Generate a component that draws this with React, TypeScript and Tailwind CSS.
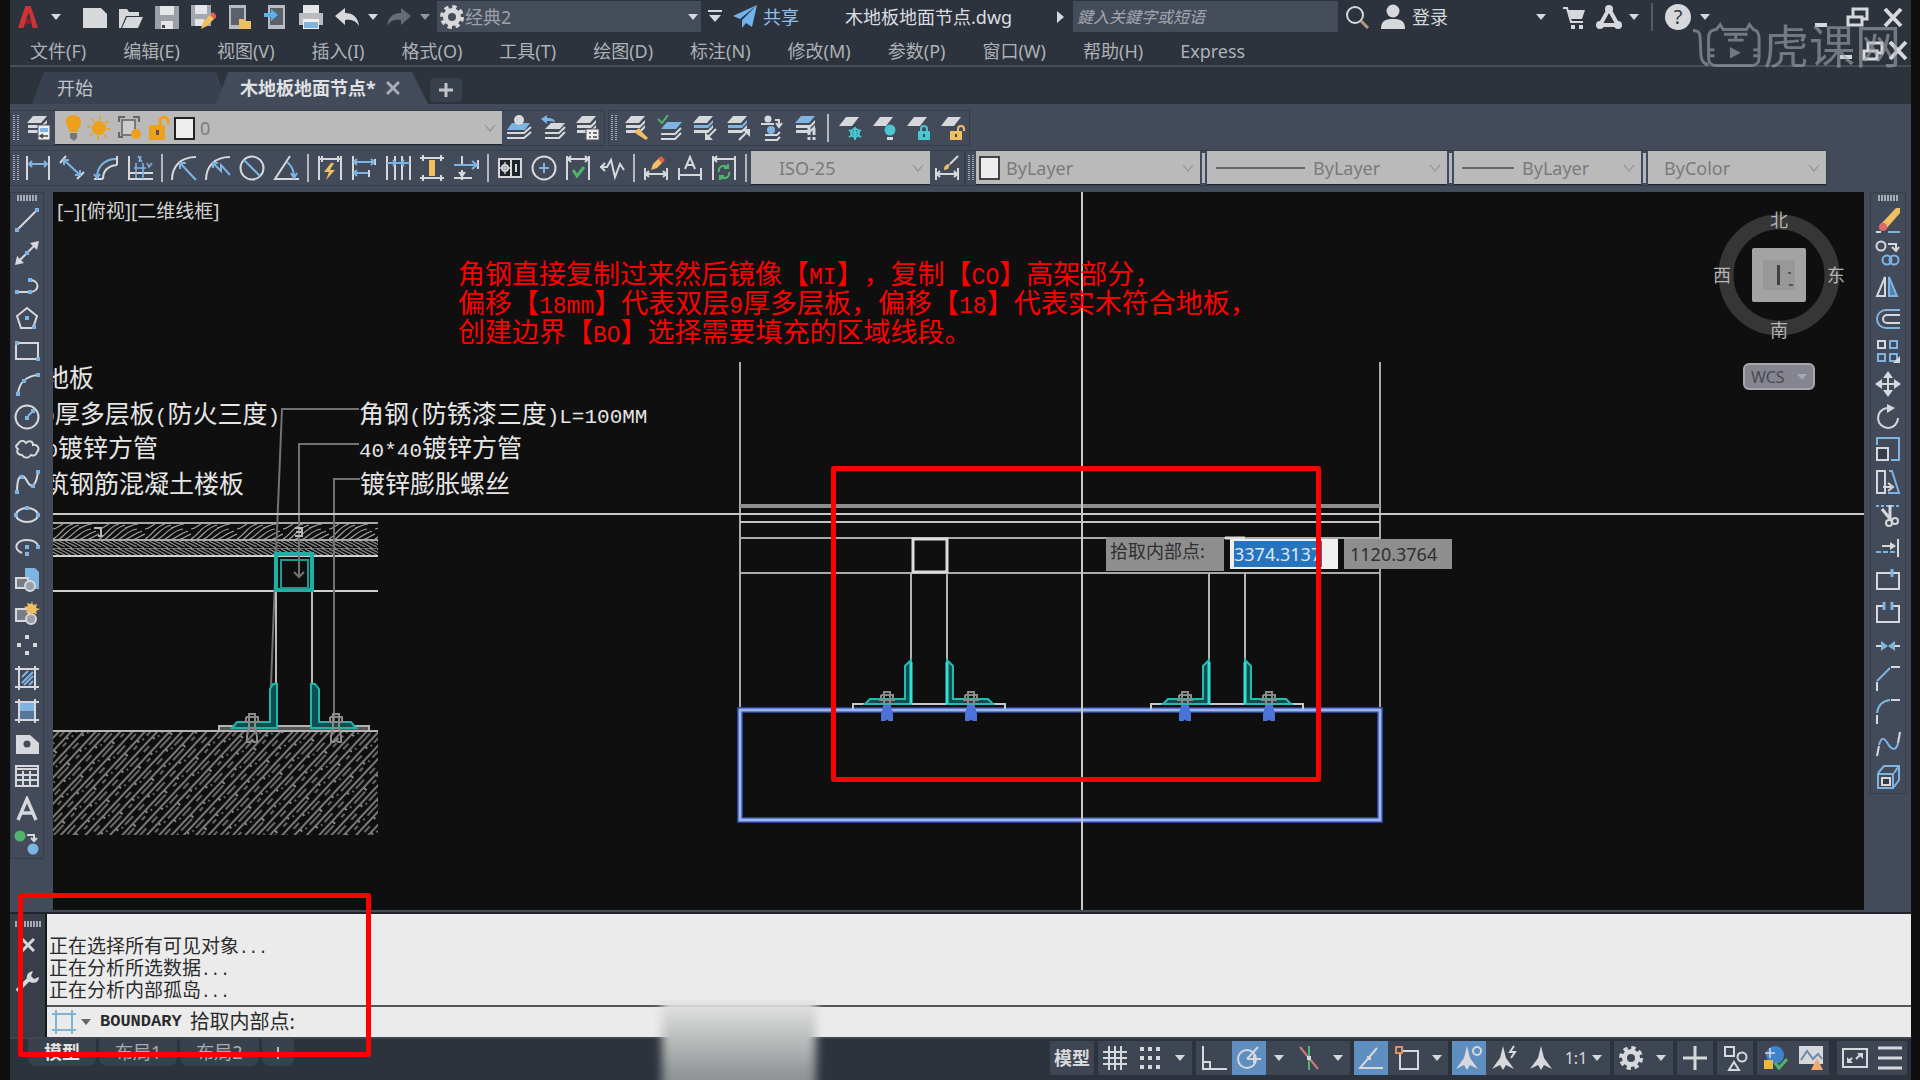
import React, { ReactNode, useState } from 'react'

const W = '#d6d8dc'
const B = '#7db4e2'
const O = '#eda01c'
const Y = '#f0bf62'
const T = '#49c6cf'
const G = '#4fb56c'

const Icon = ({ children, w = 26 }: { children: ReactNode; w?: number }) => (
  <svg width={w} height="26" viewBox={`0 0 ${w} 26`} fill="none" stroke={W} strokeWidth="2" aria-hidden="true">
    {children}
  </svg>
)

const Down = () => (
  <svg width="12" height="8" viewBox="0 0 12 8" aria-hidden="true">
    <path d="M1 1h10l-5 6z" fill={W} />
  </svg>
)

const Dot = ({ x, y, c = B }: { x: number; y: number; c?: string }) => (
  <rect x={x - 2} y={y - 2} width="4" height="4" fill={c} stroke="none" />
)

// three stacked sheets, used by every layer tool
const Sheets = ({ top = W, mid = W }: { top?: string; mid?: string }) => (
  <g stroke="none">
    <path d="M8 1h14l-6 7H2z" fill={top} />
    <path d="M3 10h14l5-5v3l-5 5H3z" fill={mid} />
    <path d="M3 15h14l5-5v3l-5 5H3z" fill={W} />
  </g>
)

const Sheet = () => <path d="M9 2h13l-7 9H2z" fill={W} stroke="none" />

const quickTools = [
  { name: '新建', art: <path d="M1 4h18l6 6v14H1z" fill={W} stroke="none" /> },
  {
    name: '打开',
    art: <path d="M1 24V5h8l2 3h10v4H8L3 24zM9 13h16l-5 11H4z" fill={W} stroke="none" />,
  },
  {
    name: '保存',
    art: (
      <g stroke="none">
        <path d="M1 2h24v23H1z" fill="#9b9fa6" />
        <path d="M6 2h14v9H6zM7 17h12v8H7z" fill="#e4e5e8" />
        <path d="M8 21h3v3H8z" fill="#444" />
      </g>
    ),
  },
  {
    name: '另存为',
    art: (
      <g stroke="none">
        <path d="M1 1h20v21H1z" fill="#a4a8ae" />
        <path d="M5 1h12v9H5zM5 15h9v7H5z" fill="#e4e5e8" />
        <path d="M11 25l2-7 9-9 4 4-9 9z" fill={Y} />
        <path d="M20 11l3-3 4 4-3 3z" fill="#e0605c" />
      </g>
    ),
  },
  {
    name: '从移动设备打开',
    art: (
      <g stroke="none">
        <path d="M3 1h17v24H3z" fill="#b9bbc0" />
        <path d="M5 4h13v17H5z" fill="#5b616b" />
        <path d="M13 25V15h4l2 2h6v8z" fill={Y} />
      </g>
    ),
  },
  {
    name: '保存到移动设备',
    art: (
      <g stroke="none">
        <path d="M6 1h17v24H6z" fill="#b9bbc0" />
        <path d="M8 4h13v17H8z" fill="#5b616b" />
        <path d="M2 9h7V5l7 6-7 6v-4H2z" fill="#59b0ee" />
      </g>
    ),
  },
  {
    name: '打印',
    art: (
      <g stroke="none">
        <path d="M5 1h16v8H5z" fill="#e4e5e8" />
        <path d="M1 9h24v12H1z" fill="#b9bbc0" />
        <path d="M5 15h16v10H5z" fill="#f0f0f0" />
        <path d="M6 18h14v6H6z" fill={B} />
      </g>
    ),
  },
]

const Undo = ({ c, flip }: { c: string; flip?: boolean }) => (
  <Icon>
    <path
      d="M1 12L11 4v5c8 0 13 4 14 13-3-5-7-7-14-6v5z"
      fill={c}
      stroke="none"
      transform={flip ? 'translate(26 0) scale(-1 1)' : undefined}
    />
  </Icon>
)

const Gear = () => (
  <Icon>
    <circle cx="13" cy="13" r="10" strokeWidth="4" strokeDasharray="4.2 3.65" />
    <circle cx="13" cy="13" r="6.5" strokeWidth="5" />
  </Icon>
)

const layerToolsA = [
  {
    name: '将对象的图层置为当前',
    art: (
      <>
        <path d="M6 8h18l-5 7H1z" fill={B} stroke="none" />
        <circle cx="13" cy="5" r="5" fill={W} stroke="none" />
        <path d="M1 18h17l7-6M1 23h17l7-6" />
      </>
    ),
  },
  {
    name: '上一个图层',
    art: (
      <>
        <path d="M11 8h14l-5 6H5z" fill={W} stroke="none" />
        <path d="M5 18h14l6-6M5 23h14l6-6" />
        <path d="M1 4l6-4v3c5 0 8 1 8 5-2-2-4-2-8-2v3z" fill={B} stroke="none" />
      </>
    ),
  },
  {
    name: '图层状态管理器',
    art: (
      <>
        <Sheets />
        <path d="M12 14h13v11H12z" fill="#eee" stroke="#555" strokeWidth="1" />
        <path d="M15 18h2m2 0h4m-8 4h2m2 0h4" stroke="#444" strokeWidth="1.5" />
      </>
    ),
  },
]

const layerToolsB = [
  {
    name: '图层匹配',
    art: (
      <>
        <Sheets />
        <path d="M11 17l5-4 3 4 6 6-2 2-8-5z" fill={Y} stroke="none" />
      </>
    ),
  },
  {
    name: '更改为当前图层',
    art: (
      <>
        <path d="M10 7h15l-6 7H4z" fill={B} stroke="none" />
        <path d="M4 19h14l6-6M4 24h14l6-6" />
        <path d="M1 4l4 4 6-8" stroke={G} />
      </>
    ),
  },
  {
    name: '将对象复制到新图层',
    art: (
      <>
        <Sheets mid={B} />
        <path d="M25 14l-8 8" />
        <path d="M14 25v-8l8 8z" fill={W} stroke="none" />
      </>
    ),
  },
  {
    name: '图层漫游',
    art: (
      <>
        <Sheets mid={B} />
        <path d="M14 25l8-8" />
        <path d="M25 14v8l-8-8z" fill={W} stroke="none" />
      </>
    ),
  },
  {
    name: '冻结到视口',
    art: (
      <>
        <circle cx="9" cy="4" r="3.5" fill={W} stroke="none" />
        <path d="M2 9h13M6 20h12l3-3M6 25h12l3-3" />
        <path d="M16 5h4v6m-3-3l3 4 3-4" />
        <circle cx="12" cy="15" r="4" fill={B} stroke="none" />
      </>
    ),
  },
  {
    name: '图层隔离',
    art: (
      <>
        <Sheets top={B} />
        <path d="M16 13v7m5-7v7m-5 2v3m5-3v3" strokeWidth="3" />
      </>
    ),
  },
]

const layerToolsC = [
  {
    name: '图层冻结',
    art: (
      <>
        <Sheet />
        <path d="M18 12v13M12 15l12 7M24 15l-12 7" stroke={T} />
        <circle cx="18" cy="18" r="4" stroke={T} />
      </>
    ),
  },
  {
    name: '图层关闭',
    art: (
      <>
        <Sheet />
        <circle cx="19" cy="15" r="5.5" fill={T} stroke="none" />
        <path d="M16 22h6v3h-6z" fill={W} stroke="none" />
      </>
    ),
  },
  {
    name: '图层锁定',
    art: (
      <>
        <Sheet />
        <path d="M16 17v-3a3 3 0 016 0v3" stroke={T} />
        <path d="M13 16h12v9H13z" fill={T} stroke="none" />
        <path d="M18 19h2v3h-2z" fill="#444" stroke="none" />
      </>
    ),
  },
  {
    name: '图层解锁',
    art: (
      <>
        <Sheet />
        <path d="M19 17v-3a3 3 0 016 0v2" stroke={Y} />
        <path d="M11 16h12v9H11z" fill={Y} stroke="none" />
        <path d="M16 19h2v3h-2z" fill="#444" stroke="none" />
      </>
    ),
  },
]

const dimGroups = [
  [
    { name: '线性', art: <><path d="M2 1v24M24 1v24" /><path d="M4 9h18M7 6L4 9l3 3M19 6l3 3-3 3" stroke={B} /></> },
    { name: '对齐', art: <><path d="M1 8l6-7M18 24l7-7" /><path d="M5 5l16 15M5 10V5h5M16 20h5v-5" stroke={B} /></> },
    { name: '弧长', art: <><path d="M1 24h9M24 1v9M10 24c0-8 5-13 14-14" /><path d="M4 23C4 11 12 4 23 4M1 19l3 4 3-4" stroke={B} /></> },
    { name: '坐标', art: <><path d="M2 1v23h24M2 18h24" /><path d="M9 8v15M14 1l-2 6M11 1l4 6M16 8v16M7 13h12M20 8l2 4 3-4" stroke={B} strokeWidth="1.6" /></> },
  ],
  [
    { name: '半径', art: <><path d="M25 2C10 2 1 11 1 25" /><path d="M9 8l16 17M9 14V8h6" stroke={B} /></> },
    { name: '折弯', art: <><path d="M25 2C10 2 1 11 1 25" /><path d="M8 8l8 8v-6l9 10M8 13V8h5" stroke={B} /></> },
    { name: '直径', art: <><circle cx="13" cy="13" r="11.5" /><path d="M5 5l16 16" stroke={B} /></> },
    { name: '角度', art: <><path d="M17 1L2 24h24" /><path d="M14 7c5 4 7 9 7 15M18 18l3 5 3-5" stroke={B} /></> },
  ],
  [
    { name: '快速标注', art: <><path d="M2 1v24M24 1v24M2 4h22M5 1v6M21 1v6" /><path d="M14 8l-7 9h5l-3 8 9-10h-5l4-7z" fill={Y} stroke="none" /></> },
    { name: '基线', art: <><path d="M2 1v24M24 4v6M18 15v7" /><path d="M3 7h20M3 18h14M6 4L3 7l3 3M6 15l-3 3 3 3M20 4l3 3-3 3" stroke={B} /></> },
    { name: '连续', art: <><path d="M2 1v24M10 1v24M17 1v24M25 1v24" /><path d="M2 8h23M8 5l3 3-3 3M19 5l-3 3 3 3" stroke={B} /></> },
    { name: '等距标注', art: <><path d="M1 3h24M1 23h24M4 0v6M22 0v6M4 20v6M22 20v6" /><path d="M10 5h6v16h-6z" fill={Y} stroke="none" /></> },
    { name: '折断标注', art: <><path d="M9 1v10m0 4v10M1 23h18M25 5v9" /><path d="M1 10h22M19 6l5 4-5 4" stroke={B} /><path d="M5 17l4 6 4-6z" fill={W} stroke="none" /></> },
  ],
  [
    { name: '公差', art: <><path d="M2 4h22v18H2z" fill="#20252c" /><path d="M14 4v18M19 9v8" /><circle cx="8" cy="13" r="3" /><path d="M8 7v12M3 13h10" strokeWidth="1.4" /></> },
    { name: '圆心标记', art: <><circle cx="13" cy="13" r="11.5" /><path d="M13 8v10M8 13h10" stroke={B} /></> },
    { name: '检验', art: <><path d="M2 1v24M24 1v24M2 4h22M6 1L3 4l3 3M20 1l3 3-3 3" /><path d="M8 15l4 6 7-9" stroke={G} strokeWidth="3" /></> },
    { name: '折弯线性', art: <path d="M1 12h7l4-7 4 17 5-13 4 6M6 8l-4 4 4 4" /> },
  ],
  [
    { name: '编辑标注', art: <><path d="M2 13v12M24 13v12M2 19h22M6 16l-3 3 3 3M20 16l3 3-3 3" /><path d="M8 15l2-6 6-6 4 4-6 6z" fill={Y} stroke="none" /><path d="M15 4l3-3 4 4-3 3z" fill="#e0605c" stroke="none" /></> },
    { name: '编辑标注文字', art: <><path d="M2 13v12M24 13v12M2 20h22M8 14l5-12 5 12M10 10h6" /></> },
    { name: '标注更新', art: <><path d="M2 1v24M24 1v24M2 4h22M6 1L3 4l3 3" /><path d="M8 17a5 5 0 019-4M18 17a5 5 0 01-9 4M17 9v4h-4M9 25v-4h4" stroke={G} /></> },
  ],
]

const drawTools = [
  { name: '直线', art: <><path d="M3 23L23 3" /><Dot x={3} y={23} /><Dot x={23} y={3} /></> },
  { name: '构造线', art: <><path d="M4 22L22 4" /><path d="M25 1l-2 9-7-7zM1 25l2-9 7 7z" fill={W} stroke="none" /><Dot x={13} y={13} /></> },
  { name: '多段线', art: <><path d="M2 19h14c10 0 10-12 0-12" /><Dot x={3} y={19} /><Dot x={16} y={19} /><Dot x={16} y={7} /></> },
  { name: '多边形', art: <><path d="M13 3l10 8-4 12H7L3 11z" /><Dot x={13} y={13} /><Dot x={20} y={22} /></> },
  { name: '矩形', art: <><path d="M2 5h22v16H2z" /><Dot x={3} y={5} /><Dot x={24} y={21} /></> },
  { name: '圆弧', art: <><path d="M4 23C5 12 12 5 24 4" /><Dot x={4} y={23} /><Dot x={10} y={10} /><Dot x={24} y={4} /></> },
  { name: '圆', art: <><circle cx="13" cy="13" r="11.5" /><path d="M14 12l5-5" stroke={B} /><Dot x={13} y={14} /><Dot x={19} y={7} /></> },
  { name: '修订云线', art: <path d="M4 8c2-4 6-4 8-1 3-3 7-2 7 2 5-1 7 4 4 7-1 4-4 4-6 3-3 4-7 3-9 0-4 0-6-3-4-6-3-2-2-4 0-5z" /> },
  { name: '样条曲线', art: <><path d="M3 23C3 4 9 4 13 12s9 6 11-9" /><Dot x={3} y={23} /><Dot x={8} y={8} /><Dot x={19} y={17} /><Dot x={24} y={3} /></> },
  { name: '椭圆', art: <><ellipse cx="13" cy="13" rx="11" ry="7" /><Dot x={2} y={13} /><Dot x={24} y={13} /><Dot x={13} y={6} /></> },
  { name: '椭圆弧', art: <><path d="M8 19C-2 15 2 6 13 6c7 0 11 3 11 7" /><Dot x={13} y={13} /><Dot x={24} y={13} /><Dot x={13} y={20} /></> },
  { name: '插入块', art: <><path d="M11 1h10l4 4v17H11z" fill={B} stroke="none" /><path d="M2 11h12v10H2z" fill="#777c86" /><circle cx="16" cy="19" r="5" fill="#9a9ea6" /></> },
  { name: '创建块', art: <><path d="M2 9h13v12H2z" fill="#777c86" /><circle cx="17" cy="19" r="5" fill="#9a9ea6" /><path d="M18 1l1 4 4-1-1 4 4 1-4 2 1 3-4-1-2 3-1-4-4 1 1-4-3-2 4-1-1-3 4 1z" fill={Y} stroke="none" /></> },
  { name: '点', art: <><Dot x={13} y={5} c={W} /><Dot x={5} y={13} c={W} /><Dot x={21} y={13} c={W} /><Dot x={13} y={21} c={W} /></> },
  { name: '图案填充', art: <><path d="M5 1v24M21 1v24M1 4h24M1 22h24" /><path d="M8 12l6-6M8 18L19 7M10 20l9-9M15 20l4-4" stroke={B} /></> },
  { name: '渐变色', art: <><path d="M6 5h14v8H6z" fill={B} stroke="none" /><path d="M6 13h14v8H6z" fill="#56779a" stroke="none" /><path d="M5 1v24M21 1v24M1 4h24M1 22h24" /></> },
  { name: '面域', art: <><path d="M2 4h14l9 8v11H2z" fill={W} stroke="none" /><circle cx="13" cy="13" r="3.5" fill="#444b57" stroke="none" /></> },
  { name: '表格', art: <><path d="M2 3h22v20H2z" /><path d="M2 6h22M2 12h22M2 17h22M9 8v15M16 8v15" /></> },
  { name: '多行文字', art: <path d="M4 24L13 3l9 21M8 17h10" strokeWidth="3.4" /> },
  { name: '添加选定对象', art: <><circle cx="6" cy="7" r="5.5" fill={G} stroke="none" /><circle cx="19" cy="20" r="5.5" fill={B} stroke="none" /><path d="M13 6h7v6M17 9l3 3 3-3" /></> },
]

const modifyTools = [
  { name: '删除', art: <><path d="M1 25h5" /><path d="M13 25h12" stroke={B} /><path d="M6 17L21 1h4v5L11 22z" fill={Y} stroke="none" /><circle cx="8" cy="20" r="4" fill="#e0696a" stroke="none" /></> },
  { name: '复制', art: <><circle cx="6" cy="6" r="4.5" /><path d="M13 4h8v6M17 7l4 4 3-4" /><circle cx="12" cy="20" r="4.5" stroke={B} /><circle cx="19" cy="20" r="4.5" stroke={B} /></> },
  { name: '镜像', art: <><path d="M10 4v19H2z" /><path d="M14 4v19h8z" stroke={B} fill="#5284b0" /></> },
  { name: '偏移', art: <><path d="M25 4H11a9 9 0 000 18h14" stroke={B} /><path d="M25 9H12a4 4 0 000 8h13" /></> },
  { name: '阵列', art: <><path d="M3 3h7v7H3z" /><path d="M15 3h7v7h-7zM3 16h7v7H3zM15 16h7v7h-7z" stroke={B} /><path d="M25 18v7h-7z" fill={W} stroke="none" /></> },
  { name: '移动', art: <><path d="M13 3v20M3 13h20" /><path d="M13 0l5 7H8zM13 26l5-7H8zM0 13l7-5v10zM26 13l-7-5v10z" fill={W} stroke="none" /></> },
  { name: '旋转', art: <><path d="M12 4a10 10 0 1011 10" /><path d="M12 0l8 4-8 5z" fill={W} stroke="none" /></> },
  { name: '缩放', art: <><path d="M2 9V2h22v22h-8" stroke={B} /><path d="M2 12h11v12H2z" fill="#373d49" /></> },
  { name: '拉伸', art: <><path d="M2 2h8v22H2z" /><path d="M14 2h3l7 22H13" stroke={B} /><path d="M8 18h8M13 14l5 4-5 4" /></> },
  { name: '修剪', art: <><path d="M1 4h24" strokeDasharray="3 2" stroke={B} /><path d="M7 7l9 11M15 3v14" strokeWidth="3" /><circle cx="14" cy="21" r="3" /><circle cx="20" cy="19" r="3" /></> },
  { name: '延伸', art: <><path d="M23 4v18M7 11h11" /><path d="M15 7l6 4-6 4z" fill={W} stroke="none" /><path d="M1 17h21" stroke={B} strokeDasharray="5 2" /></> },
  { name: '打断于点', art: <><path d="M2 6h22v16H2z" /><path d="M17 2v8" stroke={B} strokeWidth="3" /></> },
  { name: '打断', art: <><path d="M9 6H2v16h22V6h-6" /><path d="M9 2v8M17 2v8" stroke={B} strokeWidth="3" /></> },
  { name: '合并', art: <><path d="M1 13h6M19 13h6" /><path d="M6 8l7 5-7 5zM20 8l-7 5 7 5z" fill={B} stroke="none" /></> },
  { name: '倒角', art: <><path d="M2 26v-9M16 2h9" /><path d="M2 16L15 3" stroke={B} /></> },
  { name: '圆角', art: <><path d="M2 26v-9M16 2h9" /><path d="M2 15C3 7 8 3 15 2" stroke={B} /></> },
  { name: '光顺曲线', art: <><path d="M2 25l2-10M25 1l-2 11" /><path d="M4 14C7 4 10 8 13 13s8 8 10-1" stroke={B} /></> },
  { name: '分解', art: <><path d="M3 9l6-7h15v14l-5 7M24 2l-5 7" stroke={B} /><path d="M3 10h15v14H3z" stroke={B} /><path d="M7 14h8v7H7z" fill="#343a46" /></> },
]

const menus = ['文件(F)', '编辑(E)', '视图(V)', '插入(I)', '格式(O)', '工具(T)', '绘图(D)', '标注(N)', '修改(M)', '参数(P)', '窗口(W)', '帮助(H)', 'Express']

const Tool = ({ name, art }: { name: string; art: ReactNode }) => (
  <button title={name} className="flex w-[34px] shrink-0 items-center justify-center">
    <Icon>{art}</Icon>
  </button>
)

const Grip = () => (
  <div className="flex w-[10px] shrink-0 justify-center">
    <svg width="6" height="26" aria-hidden="true">
      <path d="M1 0v26M5 0v26" stroke="#a5abb6" strokeWidth="2" strokeDasharray="1 1" />
    </svg>
  </div>
)

const TopGrip = ({ w = 20 }: { w?: number }) => (
  <svg width={w} height="8" aria-hidden="true">
    <path d={`M0 4h${w}`} stroke="#a5abb6" strokeWidth="6" strokeDasharray="2 1" />
  </svg>
)

const Sep = () => (
  <div className="flex w-[10px] shrink-0 justify-center">
    <div className="h-7 w-[2px] bg-[#b3b6bd]" />
  </div>
)

const Combo = ({ name, value, className, children }: { name: string; value: string; className: string; children?: ReactNode }) => (
  <div className={`flex h-[34px] items-center border-b border-[#20252e] bg-[#bababa] pr-[6px] ${className}`}>
    {children}
    <select aria-label={name} className="min-w-0 flex-1 appearance-none bg-transparent text-lg leading-6 text-[#7b7b7b] outline-none">
      <option>{value}</option>
    </select>
    <svg width="12" height="8" viewBox="0 0 12 8" fill="none" stroke="#9c9c9c" strokeWidth="1.5" aria-hidden="true">
      <path d="M1 1l5 6 5-6" />
    </svg>
  </div>
)

const TitleBar = () => (
  <div className="flex h-[33px] items-center">
    <button title="应用程序" className="flex w-[56px] items-center gap-3 pl-2">
      <svg width="20" height="24" viewBox="0 0 22 24" aria-hidden="true">
        <path d="M0 24L8 0h6l8 24h-6l-1-5H8l-2 5zm9-9h5L12 7z" fill="#cc3237" />
        <path d="M6 24l3-9h5l1 4H9z" fill="#8f2024" />
      </svg>
      <Down />
    </button>
    <div className="ml-[11px] flex">
      {quickTools.map((t) => (
        <button key={t.name} title={t.name} className="flex w-9 justify-center">
          <Icon>{t.art}</Icon>
        </button>
      ))}
    </div>
    <button title="放弃" className="flex w-9 justify-center">
      <Undo c={W} />
    </button>
    <button title="放弃列表" className="flex w-4 justify-center">
      <Down />
    </button>
    <button title="重做" className="flex w-9 justify-center">
      <Undo c="#656c76" flip />
    </button>
    <button title="重做列表" className="flex w-4 justify-center opacity-60">
      <Down />
    </button>
    <label className="ml-1 flex h-[31px] w-[264px] shrink-0 items-center bg-[#444b59] pr-[2px] pl-[2px]">
      <Gear />
      <select aria-label="工作空间" className="min-w-0 flex-1 appearance-none bg-transparent text-lg leading-6 text-[#9da1a8] outline-none">
        <option>经典2</option>
      </select>
      <Down />
    </label>
    <button title="自定义快速访问工具栏" className="flex w-7 justify-center">
      <svg width="14" height="14" viewBox="0 0 14 14" aria-hidden="true">
        <path d="M0 0h14v2H0zM1 5h12l-6 7z" fill={W} />
      </svg>
    </button>
    <button className="ml-[4px] flex items-center gap-[6px] text-lg leading-6 text-[#8fc0ee]">
      <svg width="24" height="24" viewBox="0 0 24 24" aria-hidden="true">
        <path d="M24 0L0 11l7 3zM24 0L9 15v8l4-5 6 4z" fill="#6fb2ee" />
      </svg>
      共享
    </button>
    <div className="ml-[46px] w-[212px] shrink-0 text-lg leading-6 text-[#dcdde0]">木地板地面节点.dwg</div>
    <svg width="7" height="12" viewBox="0 0 7 12" aria-hidden="true">
      <path d="M0 0l7 6-7 6z" fill={W} />
    </svg>
    <input
      aria-label="搜索"
      placeholder="鍵入关鍵字或短语"
      className="ml-[9px] h-[31px] w-[265px] shrink-0 bg-[#444b59] px-1 text-base italic placeholder-[#a3a7af] outline-none"
    />
    <button title="搜索" className="ml-[6px] flex">
      <Icon>
        <circle cx="11" cy="11" r="8" />
        <path d="M17 17l7 7" stroke="#b49a80" strokeWidth="3" />
      </Icon>
    </button>
    <button className="ml-[10px] flex items-center gap-[6px] text-lg leading-6 text-[#d6d8dc]">
      <Icon>
        <circle cx="13" cy="7" r="6.5" fill={W} stroke="none" />
        <path d="M1 25c0-8 4-10 12-10s12 2 12 10z" fill={W} stroke="none" />
      </Icon>
      登录
    </button>
    <button title="登录选项" className="ml-auto flex">
      <Down />
    </button>
    <button title="购物车" className="ml-[14px] flex">
      <Icon>
        <path d="M2 4h4l4 14h12" />
        <path d="M7 6h17l-3 9H10z" fill={W} stroke="none" />
        <path d="M10 21h4v4h-4zM18 21h4v4h-4z" fill={W} stroke="none" />
      </Icon>
    </button>
    <button title="Autodesk App" className="ml-[9px] flex items-center gap-[6px]">
      <Icon>
        <path d="M13 5L4 21M13 5l9 16M5 21h16" strokeWidth="4" />
        <circle cx="13" cy="5" r="4" fill={W} stroke="none" />
        <circle cx="4" cy="21" r="4" fill={W} stroke="none" />
        <circle cx="22" cy="21" r="4" fill={W} stroke="none" />
      </Icon>
      <Down />
    </button>
    <div className="ml-[11px] h-7 w-[2px] bg-[#555c66]" />
    <button title="帮助" className="ml-3 flex items-center gap-2">
      <span className="flex h-[26px] w-[26px] items-center justify-center rounded-full bg-[#d6d8dc] text-xl leading-6 text-[#343b45]">?</span>
      <Down />
    </button>
    <div className="ml-[97px] flex items-center gap-[10px] pr-[5px]">
      <button title="最小化" className="flex">
        <Icon><path d="M7 21h12" strokeWidth="4" /></Icon>
      </button>
      <button title="还原" className="flex">
        <Icon><path d="M9 12V5h14v10h-4" strokeWidth="3" /><path d="M4 13h14v8H4z" strokeWidth="3" /></Icon>
      </button>
      <button title="关闭" className="flex">
        <Icon><path d="M5 5l16 17M21 5L5 22" strokeWidth="4" /></Icon>
      </button>
    </div>
  </div>
)

const MenuBar = () => (
  <nav className="flex h-[34px] items-center border-b-2 border-[#474e58] pt-1 pl-[20px] text-lg leading-6 text-[#aeb1b6]">
    <div className="flex flex-1 gap-[37px]">
      {menus.map((m) => (
        <button key={m} className="whitespace-nowrap">
          {m}
        </button>
      ))}
    </div>
    <button title="最小化图形" className="flex">
      <Icon><path d="M7 19h12" strokeWidth="4" /></Icon>
    </button>
    <button title="还原图形" className="flex">
      <Icon><path d="M9 12V5h14v10h-4" strokeWidth="3" /><path d="M5 13h13v8H5z" strokeWidth="3" /></Icon>
    </button>
    <button title="关闭图形" className="flex">
      <Icon><path d="M5 4l16 17M21 4L5 21" strokeWidth="4" /></Icon>
    </button>
  </nav>
)

const Watermark = () => (
  <div className="pointer-events-none absolute top-[20px] right-[10px] flex items-center text-[#a4a8ad] opacity-60">
    <svg width="70" height="46" viewBox="0 0 72 46" fill="none" stroke="currentColor" strokeWidth="3" aria-hidden="true">
      <path d="M0 8c9 0 7 5 8 22 0 8 2 13 8 13" />
      <path d="M16 16c0-6 3-9 8-9l4-5 3 5h24l3-5 4 5c4 1 6 4 6 9v20c0 5-3 8-8 8H24c-5 0-8-3-8-8z" />
      <path d="M32 12h24M36 18h16M16 28h6M16 34h6M68 28h-6M68 34h-6M44 12v6" />
      <path d="M38 25v12l11-6z" fill="currentColor" stroke="none" />
    </svg>
    <span className="text-[46px] leading-[50px] font-normal">虎课网</span>
  </div>
)

const FileTabs = () => (
  <div className="flex h-[37px] items-end pl-[22px] text-lg leading-6">
    <button className="h-8 w-[196px] bg-[#394150] pl-[25px] text-left text-[#c2c4c9] [clip-path:polygon(12px_0,184px_0,196px_100%,0_100%)]">开始</button>
    <div className="-ml-3 flex h-8 w-[214px] items-center bg-[#434b5a] pl-[24px] [clip-path:polygon(12px_0,196px_0,212px_100%,0_100%)]">
      <button className="font-bold text-[#dfe0e3]">木地板地面节点*</button>
      <button title="关闭选项卡" className="ml-[10px] flex">
        <svg width="14" height="14" viewBox="0 0 14 14" stroke="#a9acb2" strokeWidth="3" aria-hidden="true">
          <path d="M1 1l12 12M13 1L1 13" />
        </svg>
      </button>
    </div>
    <button title="新图形" className="mb-[2px] flex h-6 w-[32px] items-center justify-center rounded bg-[#38404c]">
      <svg width="14" height="14" viewBox="0 0 14 14" stroke="#c2c4c9" strokeWidth="3" aria-hidden="true">
        <path d="M7 0v14M0 7h14" />
      </svg>
    </button>
  </div>
)

const panel = 'flex h-9 items-center border border-[#373e4b]'

const Toolbars = () => (
  <div className="flex flex-col gap-1 pt-[6px] pb-[6px]">
    <div className="flex gap-[3px]">
      <div className={panel}>
        <Grip />
        <Tool
          name="图层特性管理器"
          art={
            <>
              <Sheets />
              <path d="M13 10h12v15H13z" fill="#f0f0f0" stroke="#4d535e" strokeWidth="1" />
              <path d="M15 13h8v4h-8z" fill={B} stroke="none" />
              <path d="M15 21h8m-5-2l-3 2 3 2" stroke="#444" strokeWidth="1.5" />
            </>
          }
        />
        <Combo name="图层" value="0" className="w-[447px] pl-[9px]">
          <svg width="136" height="26" viewBox="0 0 136 26" fill="none" aria-hidden="true">
            <path d="M9 0c9 0 10 9 5 14v3H5v-3C0 9 1 0 9 0z" fill={O} />
            <path d="M6 18h7v5l-3 3-4-3z" fill="#777" />
            <circle cx="35" cy="13" r="7" fill={O} />
            <circle cx="35" cy="13" r="10" stroke={O} strokeWidth="3" strokeDasharray="2 5.85" />
            <path d="M55 7V2h6M69 2h6v5M55 17v5h4" stroke="#666" strokeWidth="2" />
            <path d="M58 5h13v15H58z" stroke="#777" strokeWidth="2" fill="#ccc" />
            <circle cx="72" cy="19" r="5" fill={O} />
            <path d="M85 10h16v15H85z" fill={O} />
            <path d="M96 10V6a4 4 0 018 0v3" stroke={O} strokeWidth="3" />
            <path d="M92 15h3v5h-3z" fill="#555" />
            <path d="M111 3h19v21h-19z" fill="#eeeeee" stroke="#222" strokeWidth="2" />
          </svg>
        </Combo>
        {layerToolsA.map((t) => (
          <Tool key={t.name} {...t} />
        ))}
      </div>
      <div className={panel}>
        <Grip />
        {layerToolsB.map((t) => (
          <Tool key={t.name} {...t} />
        ))}
        <Sep />
        {layerToolsC.map((t) => (
          <Tool key={t.name} {...t} />
        ))}
      </div>
    </div>
    <div className="flex">
      <div className={panel}>
        <Grip />
        {dimGroups.map((group, i) => (
          <React.Fragment key={i}>
            {group.map((t) => (
              <Tool key={t.name} {...t} />
            ))}
            <Sep />
          </React.Fragment>
        ))}
        <Combo name="标注样式" value="ISO-25" className="w-[179px] pl-[28px]" />
        <Tool
          name="标注样式管理器"
          art={
            <>
              <path d="M2 13v12M24 13v12M2 19h22M6 16l-3 3 3 3M20 16l3 3-3 3" />
              <path d="M10 15c0-5 3-6 6-6l-2 5z" fill={Y} stroke="none" />
              <path d="M16 9l8-8" />
            </>
          }
        />
      </div>
      <div className={panel}>
        <Grip />
        <Combo name="颜色" value="ByLayer" className="w-[224px] pl-[3px]">
          <div className="mr-[6px] h-6 w-[21px] border-2 border-[#444] bg-[#ededed]" />
        </Combo>
        <div className="mx-[2px] h-[30px] w-[3px] bg-[#b3b6bd]" />
        <Combo name="线型" value="ByLayer" className="w-[240px] pl-[9px]">
          <div className="mr-[8px] h-[2px] w-[89px] bg-[#6a6a6a]" />
        </Combo>
        <div className="mx-[2px] h-[30px] w-[3px] bg-[#b3b6bd]" />
        <Combo name="线宽" value="ByLayer" className="w-[187px] pl-[8px]">
          <div className="mr-[8px] h-[2px] w-[52px] bg-[#6a6a6a]" />
        </Combo>
        <div className="mx-[2px] h-[30px] w-[3px] bg-[#b3b6bd]" />
        <Combo name="打印样式" value="ByColor" className="w-[178px] pl-[16px]" />
      </div>
    </div>
  </div>
)

const SideTools = ({ tools, h }: { tools: { name: string; art: ReactNode }[]; h: string }) => (
  <div className="flex flex-col items-center border border-[#373e4b] pt-[1px]">
    <TopGrip />
    <div className={`mt-[2px] flex w-8 flex-col items-center ${h}`}>
      {tools.map((t) => (
        <button key={t.name} title={t.name} className="flex flex-1 items-center justify-center">
          <Icon>{t.art}</Icon>
        </button>
      ))}
    </div>
  </div>
)

// CJK at 25px, latin in the fixed-width face at half that advance
const CadText = ({ x, y, end, children }: { x: number; y: number; end?: boolean; children: string }) => (
  <text x={x} y={y} textAnchor={end ? 'end' : 'start'} fill="#e6e6e6" fontSize="25">
    {children.split(/([\x20-\x7e]+)/).map((part, i) =>
      i % 2 ? (
        <tspan key={i} fontFamily="'Liberation Mono', monospace" fontSize="21">
          {part}
        </tspan>
      ) : (
        part
      ),
    )}
  </text>
)

const Bolt = ({ x, y, foot }: { x: number; y: number; foot: string }) => (
  <g transform={`translate(${x} ${y})`} fill="none" stroke="#8a8a8a" strokeWidth="2">
    <path d="M-4 -13h8M-6 -10h12v5M-6 -10v5M-3 -13v14M3 -13v14M-8 -5h16" />
    <path d="M-3 1h6l2 8v6h-3l-2-2-2 2h-3V9z" stroke={foot} fill={foot === '#8a8a8a' ? 'none' : foot} />
  </g>
)

const Post = ({ x }: { x: number }) => (
  <g transform={`translate(${x} 0)`} fill="none">
    <path d="M-18 573v131M18 573v131" stroke="#b4b4b4" strokeWidth="2" />
    <path d="M-76 709v-5H76v5" stroke="#c8c8c8" strokeWidth="2" />
    <path d="M-18 660l-6 6v33h-35l-5 5h46zM18 660l6 6v33h35l5 5H18z" stroke="#27b9b2" strokeWidth="2" fill="#0d4f4c" />
    <path d="M-18 662v42M18 662v42" stroke="#35e0d8" strokeWidth="3" />
    <Bolt x={-42} y={705} foot="#4b72d6" />
    <Bolt x={42} y={705} foot="#4b72d6" />
  </g>
)

const Drawing = () => (
  <svg className="absolute inset-0 h-full w-full" aria-label="木地板地面节点">
    <defs>
      <pattern id="concrete" width="18" height="46" patternUnits="userSpaceOnUse" patternTransform="rotate(43)">
        <path d="M2 0v46M11 0v46" stroke="#9a9a9a" strokeWidth="1.5" />
        <path d="M6 0v12M6 15v2M6 30v8M15 8v16M15 28v2M15 38v5" stroke="#858585" strokeWidth="1.5" />
        <path d="M3 20h2v2H3zM12 5h3v2h-3zM12 33h2v2h-2z" fill="#8a8a8a" />
      </pattern>
      <pattern id="wood" width="46" height="17" x="53" y="523" patternUnits="userSpaceOnUse">
        <path
          d="M0 16C8 12 10 3 20 1M5 17C13 12 15 5 26 2M11 17C20 14 20 7 32 3M18 17c8-3 9-9 20-11M25 17c7-2 9-6 18-9M33 17c5-1 8-4 13-6M0 6c4 0 6-3 10-5M26 5c5-1 8-4 13-4"
          stroke="#a0a0a0"
          strokeWidth="1.2"
          fill="none"
        />
      </pattern>
      <pattern id="ply" width="12" height="8" x="53" y="540" patternUnits="userSpaceOnUse">
        <path d="M0 0h12M0 1l12 6M4 0l8 4M0 4l7 4" stroke="#8c8c8c" strokeWidth="1.3" />
      </pattern>
    </defs>
    <g transform="translate(-53 -192)">
      <g fill="none" strokeWidth="2">
        <path d="M53 523h325v17H53z" fill="url(#wood)" />
        <path d="M53 541h325v15H53z" fill="url(#ply)" />
        <path d="M53 523h325M53 540h325" stroke="#a8a8a8" />
        <path d="M53 556h325M53 591h325" stroke="#cfcfcf" />
        <path d="M53 732h325v103H53z" fill="url(#concrete)" />
        <path d="M53 731h325" stroke="#b4b4b4" />
        <path d="M359 409h-77l-6 146-6 155M359 444h-60v132M294 572l5 5 5-5M360 479h-26v250" stroke="#727272" />
        <path d="M94 528h7v8M98 536h5M295 528h7v8M296 532h6M295 536h8" stroke="#b8b8b8" />
        <path d="M276 591v137M312 591v137" stroke="#b9b9b9" />
        <path d="M276 554h36v36h-36z" stroke="#1fb0a4" strokeWidth="4" />
        <path d="M281 560h27v28h-27z" stroke="#1a9a90" />
        <path d="M219 726h150v5H219z" stroke="#b4b4b4" fill="#555" />
        <path d="M277 684h-4l-3 5v33h-33l-5 6h45zM311 684h4l4 5v33h32l5 6h-45z" stroke="#1fb5ac" fill="#0d4f4c" />
        <Bolt x={252} y={727} foot="#8a8a8a" />
        <Bolt x={336} y={727} foot="#8a8a8a" />
      </g>

      <CadText x={94} y={387} end>地板</CadText>
      <CadText x={280} y={423} end>9厚多层板(防火三度)</CadText>
      <CadText x={158} y={457} end>0镀锌方管</CadText>
      <CadText x={244} y={493} end>筑钢筋混凝土楼板</CadText>
      <CadText x={359} y={423}>角钢(防锈漆三度)L=100MM</CadText>
      <CadText x={359} y={457}>40*40镀锌方管</CadText>
      <CadText x={360} y={493}>镀锌膨胀螺丝</CadText>

      <g fill="none" strokeWidth="2">
        <path d="M740 362v346M1380 362v346" stroke="#a9a9a9" />
        <path d="M740 506h640" stroke="#8e8e8e" strokeWidth="4" />
        <path d="M740 522h640" stroke="#c4c4c4" />
        <path d="M740 538h640M740 573h640" stroke="#ababab" />
        <path d="M913 539h34v33h-34z" stroke="#dcdcdc" strokeWidth="3" />
        <path d="M1225 538h20" stroke="#dcdcdc" strokeWidth="3" />
        <path d="M740 710h640v110H740z" stroke="#27418f" strokeWidth="6" />
        <path d="M740 710h640v110H740z" stroke="#9db4f2" strokeWidth="3" />
        <Post x={929} />
        <Post x={1227} />
      </g>
      <path d="M53 514h4000M1082 192v2000" stroke="#c8c8c8" strokeWidth="2" />
    </g>
  </svg>
)

const ViewCube = () => (
  <div className="absolute top-[16px] right-[19px] flex w-[132px] flex-col items-center text-lg leading-6 text-[#b4b4b4]">
    <div className="relative flex h-[134px] w-full items-center justify-between">
      <svg className="absolute inset-0" width="132" height="134" aria-hidden="true">
        <circle cx="66" cy="67" r="53" fill="none" stroke="#363636" strokeWidth="15" />
      </svg>
      <button className="relative">西</button>
      <div className="relative flex h-full flex-col items-center justify-between">
        <button>北</button>
        <button title="上" className="flex h-[54px] w-[54px] items-center justify-center rounded-[2px] bg-[#a3a3a3]">
          <svg width="32" height="30" viewBox="0 0 32 30" aria-hidden="true">
            <path d="M0 0h32v30H0z" fill="#989898" />
            <path d="M14 5h3v20h-3z" fill="#3f3f46" />
            <path d="M25 12h3v2h-3zM26 24h4v2h-4z" fill="#555" />
          </svg>
        </button>
        <button>南</button>
      </div>
      <button className="relative">东</button>
    </div>
    <button className="mt-[21px] flex h-[27px] w-[72px] items-center justify-between rounded-md border-2 border-[#a6a6ae] bg-[#85858f] px-[6px] text-base leading-5 text-[#4a4a50]">
      WCS
      <svg width="10" height="6" viewBox="0 0 10 6" aria-hidden="true">
        <path d="M0 0h10L5 6z" fill="#a8a8b2" />
      </svg>
    </button>
  </div>
)

const Mono = ({ children }: { children: string }) => (
  <span className="font-['Liberation_Mono',monospace] text-[23px] leading-[0]">{children}</span>
)

const Canvas = () => (
  <main className="relative min-w-0 flex-1 overflow-hidden bg-[#0f0f0f]">
    <Drawing />
    <div className="absolute top-[7px] left-[4px] flex text-[19px] leading-6 text-[#d2d2d2]">
      <button>[−]</button>
      <button>[俯视]</button>
      <button>[二维线框]</button>
    </div>
    <p className="absolute top-[67px] left-[405px] text-[27px] leading-[29px] whitespace-nowrap text-[#ff0000] [text-spacing-trim:space-all]">
      角钢直接复制过来然后镜像【<Mono>MI</Mono>】，复制【<Mono>CO</Mono>】高架部分，
      <br />
      偏移【<Mono>18mm</Mono>】代表双层<Mono>9</Mono>厚多层板，偏移【<Mono>18</Mono>】代表实木符合地板，
      <br />
      创建边界【<Mono>BO</Mono>】选择需要填充的区域线段。
    </p>
    <div className="absolute top-[345px] left-[1053px] flex items-center gap-[6px] text-lg leading-6 text-[#303030]">
      <label htmlFor="pick-x" className="h-[34px] w-[118px] bg-[#8e8e8e] pt-[2px] pl-1">
        拾取内部点:
      </label>
      <div className="h-[30px] w-[108px] bg-[#f0f0f0] py-[2px] pr-4 pl-[4px]">
        <input id="pick-x" defaultValue="3374.3137" className="h-[26px] w-full bg-[#2674bd] text-[#dbe8f6] outline-none" />
      </div>
      <input aria-label="Y" defaultValue="1120.3764" className="h-[30px] w-[108px] bg-[#8e8e8e] px-[6px] outline-none" />
    </div>
    <div className="pointer-events-none absolute top-[274px] left-[778px] h-[316px] w-[490px] rounded-[3px] border-[5px] border-[#ff0000]" />
    <ViewCube />
  </main>
)

const Dots = () => <span className="font-['Liberation_Mono',monospace] text-base leading-[0]">...</span>

const CommandWindow = () => (
  <div className="flex h-[125px] border-t-2 border-[#20242c] bg-[#373e4a]">
    <div className="flex w-[35px] flex-col items-center pt-[6px]">
      <TopGrip w={26} />
      <button title="关闭" className="mt-[10px] flex">
        <svg width="14" height="14" viewBox="0 0 14 14" stroke={W} strokeWidth="3" aria-hidden="true">
          <path d="M1 1l12 12M13 1L1 13" />
        </svg>
      </button>
      <button title="自定义" className="mt-[16px] flex">
        <Icon>
          <path d="M2 23L14 11" strokeWidth="4" />
          <path d="M13 13c-3-5 0-9 5-10l-2 5 3 3 5-2c0 5-5 8-11 4z" fill={W} stroke="none" />
        </Icon>
      </button>
    </div>
    <div className="flex min-w-0 flex-1 flex-col border-l-2 border-[#15171b] bg-[#ebebeb] text-[#2b2b2b]">
      <div className="min-h-0 flex-1 pt-[21px] pl-[2px] text-[19px] leading-[22px]">
        <div>正在选择所有可见对象<Dots /></div>
        <div>正在分析所选数据<Dots /></div>
        <div>正在分析内部孤岛<Dots /></div>
      </div>
      <div className="flex h-[32px] items-center border-t-2 border-[#555] pl-[5px]">
        <svg width="24" height="24" viewBox="0 0 24 24" fill="none" stroke="#7fb3cf" strokeWidth="2" aria-hidden="true">
          <path d="M4 0v24M20 0v24M0 4h24M0 20h24" />
        </svg>
        <svg className="mx-[4px]" width="12" height="8" viewBox="0 0 12 8" aria-hidden="true">
          <path d="M1 1h10l-5 6z" fill="#666" />
        </svg>
        <label htmlFor="cmd" className="ml-1 flex items-center gap-2 text-[20px] leading-6 whitespace-nowrap">
          <span className="font-['Liberation_Mono',monospace] text-[17px] font-bold">BOUNDARY</span>
          拾取内部点:
        </label>
        <input id="cmd" className="ml-1 min-w-0 flex-1 bg-transparent outline-none" />
      </div>
    </div>
  </div>
)

const Cell = ({ w, name, on, children }: { w: string; name: string; on?: boolean; children: ReactNode }) => (
  <button title={name} className={`flex h-[34px] items-center justify-center ${w} ${on ? 'bg-[#5f8ec0]' : ''}`}>
    {children}
  </button>
)

const group = 'flex bg-[#3f4653]'

const Anno = () => <path d="M13 1l3 12 8 11-8-4-3 5-3-5-8 4 8-11z" fill={W} stroke="none" />

const StatusBar = () => {
  const [layout, setLayout] = useState('模型')
  const tab = 'h-[27px] rounded-b-lg bg-[#39414d] text-lg leading-[27px]'

  return (
    <footer className="flex h-[43px] items-center border-t-2 border-[#3f454f] bg-[#2c333c] pr-1 pb-[3px]">
      <div className="flex flex-1 gap-[3px] self-start pl-[18px]">
        {['模型', '布局1', '布局2'].map((name) => (
          <button
            key={name}
            onClick={() => setLayout(name)}
            className={`${tab} px-4 ${name === layout ? 'font-bold text-[#e2e3e6]' : 'text-[#a9acb2]'}`}
          >
            {name}
          </button>
        ))}
        <button title="新建布局" className="flex h-[27px] w-8 items-center justify-center rounded-b-lg bg-[#39414d]">
          <svg width="12" height="12" viewBox="0 0 12 12" stroke="#b9bbc0" strokeWidth="2" aria-hidden="true">
            <path d="M6 0v12M0 6h12" />
          </svg>
        </button>
      </div>
      <div className="flex gap-1 text-lg leading-6 text-[#d6d8dc]">
        <div className={group}>
          <Cell w="w-[44px]" name="模型空间"><b>模型</b></Cell>
        </div>
        <div className={group}>
          <Cell w="w-[34px]" name="栅格"><Icon><path d="M7 1v24M13 1v24M19 1v24M1 7h24M1 13h24M1 19h24" /></Icon></Cell>
          <Cell w="w-[36px]" name="捕捉">
            <Icon><path d="M3 4h20M3 13h20M3 22h20" strokeWidth="4" strokeDasharray="4 4" /></Icon>
          </Cell>
          <Cell w="w-[24px]" name="捕捉选项"><Down /></Cell>
        </div>
        <div className={group}>
          <Cell w="w-[36px]" name="正交"><Icon><path d="M2 1v23h24M2 17h7v7" /></Icon></Cell>
          <Cell w="w-[34px]" name="极轴追踪" on>
            <Icon><circle cx="11" cy="14" r="9" /><path d="M11 14h14M11 14L22 2M18 10v8" /></Icon>
          </Cell>
          <Cell w="w-[26px]" name="极轴选项"><Down /></Cell>
          <Cell w="w-[34px]" name="等轴测草图">
            <Icon><path d="M13 1v24" stroke={G} /><path d="M4 2l18 22" stroke="#c97a80" /><Dot x={13} y={13} c={W} /></Icon>
          </Cell>
          <Cell w="w-[24px]" name="等轴测选项"><Down /></Cell>
        </div>
        <div className={group}>
          <Cell w="w-[34px]" name="对象捕捉追踪" on>
            <Icon><path d="M19 3L2 23h23" /><Dot x={11} y={13} c={W} /></Icon>
          </Cell>
          <Cell w="w-[38px]" name="对象捕捉">
            <Icon><path d="M6 6h18v18H6z" /><path d="M2 2h6v6H2z" fill="#444" stroke="#e0906c" /></Icon>
          </Cell>
          <Cell w="w-[22px]" name="对象捕捉选项"><Down /></Cell>
        </div>
        <div className={group}>
          <Cell w="w-[34px]" name="注释可见性" on><Icon><g transform="translate(-2 0)"><Anno /></g><circle cx="21" cy="6" r="4" /></Icon></Cell>
          <Cell w="w-[38px]" name="自动缩放"><Icon><g transform="translate(-2 0)"><Anno /></g><path d="M22 1l-4 6h5l-4 6" /></Icon></Cell>
          <Cell w="w-[34px]" name="注释比例"><Icon><Anno /></Icon></Cell>
          <Cell w="w-[52px]" name="当前视图的注释比例"><span className="mr-1 text-base leading-6">1:1</span><Down /></Cell>
        </div>
        <div className={group}>
          <Cell w="w-[34px]" name="切换工作空间"><Gear /></Cell>
          <Cell w="w-[25px]" name="工作空间选项"><Down /></Cell>
        </div>
        <div className={group}>
          <Cell w="w-[36px]" name="注释监视器"><Icon><path d="M13 1v24M1 13h24" strokeWidth="3" /></Icon></Cell>
        </div>
        <div className={group}>
          <Cell w="w-[36px]" name="隔离对象">
            <Icon><path d="M3 2h9v9H3zM12 17l5 8H7z" /><circle cx="20" cy="12" r="4.5" /></Icon>
          </Cell>
        </div>
        <div className={group}>
          <Cell w="w-[35px]" name="硬件加速">
            <Icon>
              <circle cx="13" cy="10" r="9" fill="#3f83cc" stroke="none" />
              <path d="M2 15h9v9H2z" fill="#edbb3c" stroke="none" />
              <path d="M8 3v10M3 8h10" strokeWidth="1.5" />
              <path d="M13 18l4 5 8-9" stroke={G} strokeWidth="3" />
            </Icon>
          </Cell>
          <Cell w="w-[37px]" name="性能">
            <Icon>
              <path d="M1 1h24v18H1z" fill={W} stroke="none" />
              <path d="M3 15l6-9 6 8 5-5 4 5" stroke="#6a8ba8" />
              <path d="M19 13l6 12H13z" fill="#f0a878" stroke="none" />
            </Icon>
          </Cell>
        </div>
        <div className={`${group} ml-1`}>
          <Cell w="w-[35px]" name="全屏显示">
            <Icon>
              <path d="M1 4h24v18H1z" />
              <path d="M15 8h6v6zM5 12v6h6z" fill={W} stroke="none" />
              <path d="M14 14l5-5M6 17l4-4" />
            </Icon>
          </Cell>
          <Cell w="w-[35px]" name="自定义"><Icon><path d="M1 3h24M1 13h24M1 23h24" strokeWidth="3" /></Icon></Cell>
        </div>
      </div>
    </footer>
  )
}

const App = () => (
  <div className="flex min-h-screen flex-col overflow-hidden bg-[#0f0f0f] pr-[9px] pl-[10px] font-['Noto_Sans','Noto_Sans_CJK_SC',sans-serif]">
    <header className="relative bg-[#2c333c]">
      <TitleBar />
      <MenuBar />
      <FileTabs />
      <Watermark />
    </header>
    <div className="flex flex-1 flex-col bg-[#434b5a]">
      <Toolbars />
      <div className="flex flex-1 pb-[2px]">
        <div className="w-[43px] shrink-0 pr-[9px]">
          <SideTools tools={drawTools} h="h-[654px]" />
        </div>
        <Canvas />
        <div className="w-[47px] shrink-0 pr-[5px] pl-[6px]">
          <SideTools tools={modifyTools} h="h-[589px]" />
        </div>
      </div>
    </div>
    <div className="relative">
      <CommandWindow />
      <StatusBar />
      <div className="pointer-events-none absolute inset-x-0 bottom-0 h-20 overflow-hidden">
        <div className="ml-[652px] h-24 w-[154px] bg-linear-to-b from-[#e4e4e4] via-[#bcbebe] via-40% to-[#8e9394] to-80% blur-[5px]" />
      </div>
      <div className="pointer-events-none absolute top-[-19px] left-[8px] h-[164px] w-[353px] rounded-[3px] border-[5px] border-[#ff0000]" />
    </div>
  </div>
)

export default App
